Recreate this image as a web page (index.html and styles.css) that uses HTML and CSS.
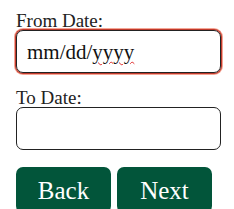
FILE: index.html
```html
<!DOCTYPE html>
<html lang="en">
<head>
  <meta charset="UTF-8" />
  <meta name="viewport" content="width=device-width, initial-scale=1.0" />
  <title>Dates</title>
  <link rel="stylesheet" href="styles.css">
</head>
<body>
  <form class="dates">
    <label class="field">
      <span class="field-label">From Date:</span>
      <span class="date-input invalid">mm/dd/<span class="misspelt">yyyy</span></span>
    </label>
    <label class="field">
      <span class="field-label">To Date:</span>
      <span class="date-input"></span>
    </label>
    <div class="actions">
      <button type="button" class="nav-btn">Back</button>
      <button type="button" class="nav-btn">Next</button>
    </div>
  </form>
</body>
</html>
```

FILE: styles.css
```css
* { box-sizing: border-box; margin: 0; padding: 0; }
body {
  background: #fff;
  font-family: "Liberation Serif", "DejaVu Serif", serif;
  color: #222;
}
.dates {
  padding: 12px 13px 0 16px;
}
.field {
  display: block;
  margin-bottom: 16px;
}
.field-label {
  display: block;
  font-size: 19px;
  line-height: 18px;
}
.date-input {
  display: block;
  height: 43px;
  border: 1px solid #222;
  border-radius: 7px;
  padding: 9px 10px;
  font-size: 21px;
  line-height: 24px;
  color: #111;
}
.date-input.invalid {
  box-shadow: 0 0 0 1px #c0392b, 0 0 0 2px #f4a595;
}
.misspelt {
  text-decoration: underline wavy #e03030;
  text-decoration-thickness: 1px;
  text-underline-offset: 2px;
}
.actions {
  display: flex;
  gap: 6px;
  margin-top: 17px;
}
.nav-btn {
  width: 95px;
  height: 46px;
  background: #02553a;
  color: #fff;
  border: none;
  border-radius: 7px;
  font-family: inherit;
  font-size: 25px;
  padding-top: 2px;
}
```
